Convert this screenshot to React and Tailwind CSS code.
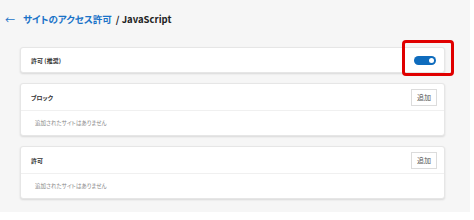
import React from "react";

const jp = "font-['Segoe_UI','Noto_Sans_CJK_JP',sans-serif] [font-feature-settings:'palt']";

function SiteList({ title }) {
  return (
    <div className="w-[425px] rounded-[3px] border border-[#e6e6e6] bg-white shadow-[0_1px_2px_rgba(0,0,0,0.12)]">
      <div className="flex h-[27px] items-center justify-between border-b border-[#f0f0f0] pl-[10px] pr-[7px]">
        <span className="text-[6px] font-bold text-[#333]">{title}</span>
        <button className="flex h-[17px] w-[26px] items-center justify-center border border-[#dcdcdc] bg-white text-[7px] text-[#555]">
          追加
        </button>
      </div>
      <div className="flex h-[24px] items-center pl-[14px]">
        <span className="text-[5.5px] text-[#888]">追加されたサイトはありません</span>
      </div>
    </div>
  );
}

export default function App() {
  return (
    <div className={`relative h-[220px] w-[474px] overflow-hidden bg-white ${jp}`}>
      <div className="h-[212px] w-[470px] bg-[#f6f6f6] pl-[20px]">
        <div className="-ml-[15px] flex h-[38px] items-center pt-[1px]">
          <span className="mr-[8px] text-[10px] text-[#1a73c8]">←</span>
          <span className="text-[9.5px] font-bold text-[#1a73c8]">サイトのアクセス許可</span>
          <span className="ml-[4px] text-[9.5px] font-bold text-[#222]">/ JavaScript</span>
        </div>
        <div className="mt-[9px] flex h-[26px] w-[425px] items-center justify-between rounded-[3px] border border-[#e6e6e6] bg-white pl-[10px] pr-[8px] shadow-[0_1px_2px_rgba(0,0,0,0.12)]">
          <span className="text-[6px] font-bold text-[#333]">許可 (推奨)</span>
          <div className="flex h-[9px] w-[22px] items-center justify-end rounded-full bg-[#0f6cbd] pr-[2px]">
            <div className="h-[5px] w-[5px] rounded-full bg-white" />
          </div>
        </div>
        <div className="mt-[10px]">
          <SiteList title="ブロック" />
        </div>
        <div className="mt-[10px]">
          <SiteList title="許可" />
        </div>
      </div>
      <div className="absolute left-[402px] top-[40px] h-[36px] w-[52px] rounded-[4px] border-[3px] border-[#e00000]" />
    </div>
  );
}
